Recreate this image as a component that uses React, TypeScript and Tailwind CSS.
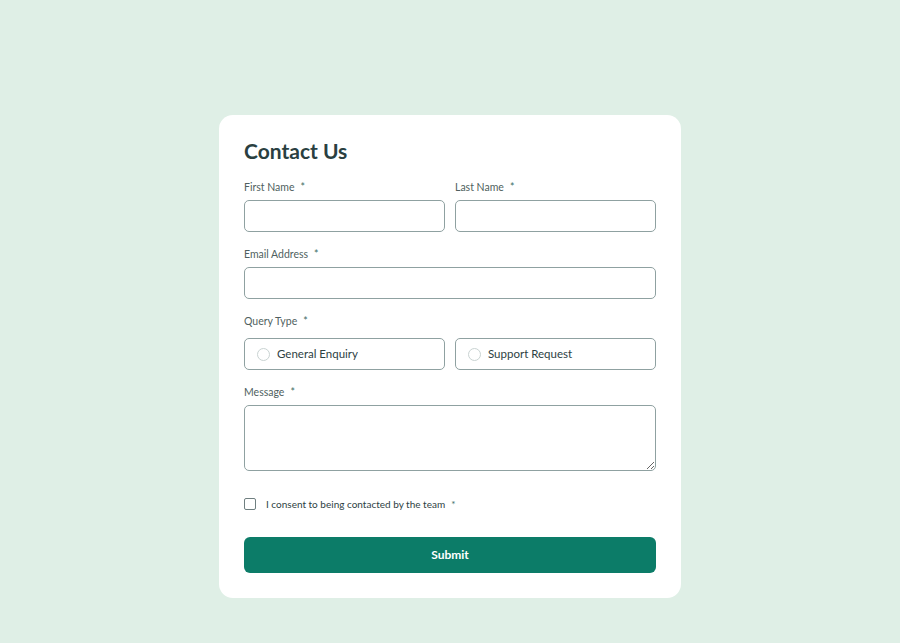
import React, { useState } from 'react';

const font = { fontFamily: 'Lato, "Liberation Sans", sans-serif' };

function Label({ text }: { text: string }) {
  return (
    <label className="block text-[10.5px] leading-[14px] text-[#4f5f60]">
      {text}
      <span className="ml-[6px] text-[#3d6e66]">*</span>
    </label>
  );
}

function Radio({ text, checked, onClick }: { text: string; checked: boolean; onClick: () => void }) {
  return (
    <button
      type="button"
      onClick={onClick}
      className="flex h-[32px] items-center gap-[7px] rounded-[5px] border border-[#8fa1a1] bg-white px-[12px] text-left"
    >
      <span className="flex h-[13px] w-[13px] items-center justify-center rounded-full border border-[#c9d3d2]">
        {checked && <span className="h-[7px] w-[7px] rounded-full bg-[#0c7c68]" />}
      </span>
      <span className="text-[11.5px] text-[#2d4143]">{text}</span>
    </button>
  );
}

export default function App() {
  const [query, setQuery] = useState<string>('');
  const [consent, setConsent] = useState<boolean>(false);

  return (
    <div className="flex min-h-[643px] w-full justify-center bg-[#dfefe6] pt-[115px]" style={font}>
      <form className="h-fit w-[462px] rounded-[14px] bg-white px-[25px] pb-[25px] pt-[23px]">
        <h1 className="text-[21px] font-bold leading-[26px] text-[#2a3f41]">Contact Us</h1>

        <div className="mt-[16px] grid grid-cols-2 gap-x-[10px]">
          <div>
            <Label text="First Name" />
            <input className="mt-[6px] h-[32px] w-full rounded-[5px] border border-[#8fa1a1] px-3 text-[13px] outline-none" />
          </div>
          <div>
            <Label text="Last Name" />
            <input className="mt-[6px] h-[32px] w-full rounded-[5px] border border-[#8fa1a1] px-3 text-[13px] outline-none" />
          </div>
        </div>

        <div className="mt-[15px]">
          <Label text="Email Address" />
          <input className="mt-[6px] h-[32px] w-full rounded-[5px] border border-[#8fa1a1] px-3 text-[13px] outline-none" />
        </div>

        <div className="mt-[15px]">
          <Label text="Query Type" />
          <div className="mt-[10px] grid grid-cols-2 gap-x-[10px]">
            <Radio text="General Enquiry" checked={query === 'general'} onClick={() => setQuery('general')} />
            <Radio text="Support Request" checked={query === 'support'} onClick={() => setQuery('support')} />
          </div>
        </div>

        <div className="mt-[15px]">
          <Label text="Message" />
          <textarea className="mt-[6px] block h-[66px] w-full rounded-[5px] border border-[#8fa1a1] px-3 py-2 text-[13px] outline-none" />
        </div>

        <label className="mt-[26px] flex items-center gap-[10px]">
          <input
            type="checkbox"
            checked={consent}
            onChange={(e) => setConsent(e.target.checked)}
            className="h-[12px] w-[12px] appearance-none rounded-[2px] border border-[#6f7f80] checked:bg-[#0c7c68]"
          />
          <span className="text-[10px] leading-[14px] text-[#2d4143]">
            I consent to being contacted by the team
            <span className="ml-[6px] text-[#3d6e66]">*</span>
          </span>
        </label>

        <button
          type="button"
          className="mt-[26px] h-[36px] w-full rounded-[6px] bg-[#0c7c68] text-[12px] font-bold text-white hover:bg-[#0a6656]"
        >
          Submit
        </button>
      </form>
    </div>
  );
}
